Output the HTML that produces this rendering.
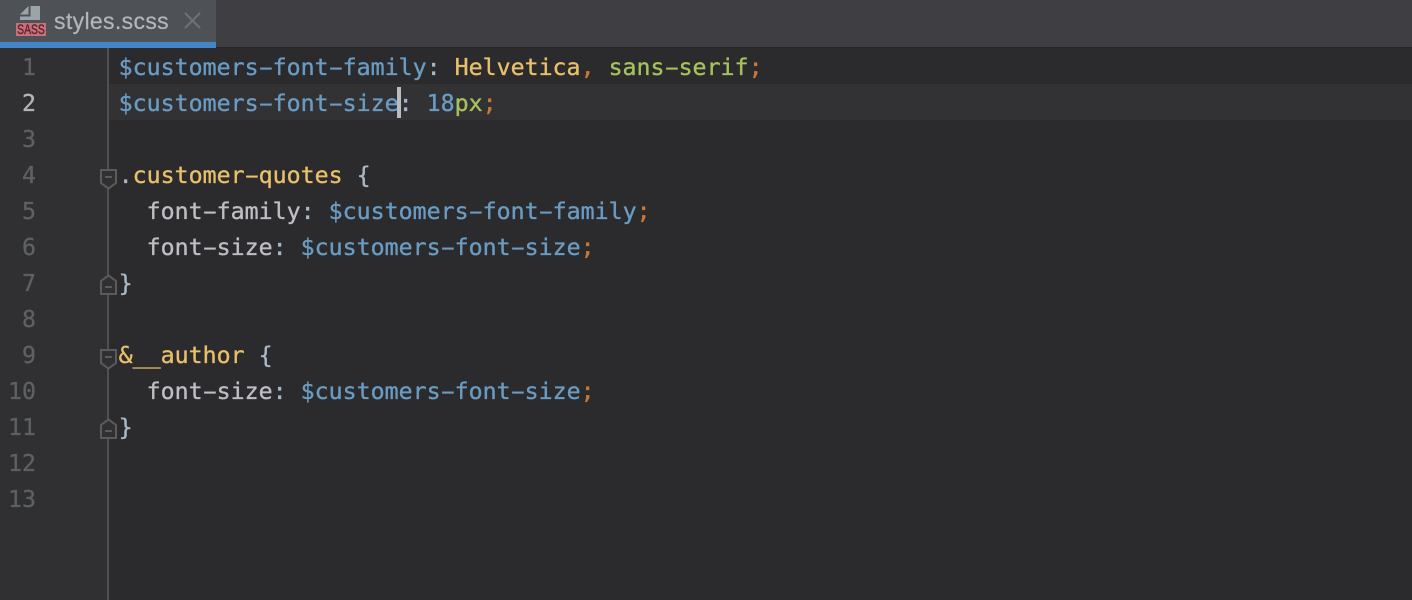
<!DOCTYPE html>
<html>
<head>
<meta charset="utf-8">
<style>
html,body{margin:0;padding:0;background:#2b2b2d;}
#p{position:relative;width:1412px;height:600px;overflow:hidden;background:#2b2b2d;font-family:"DejaVu Sans Mono","Liberation Mono",monospace;}
.a{position:absolute;}
#tabbar{left:0;top:0;width:1412px;background:#3e3e43;border-bottom:1px solid #262628;box-sizing:border-box;height:48px;}
#tab{left:0;top:0;width:216px;height:42px;background:#4e5155;}
#tabline{left:0;top:42px;width:216px;height:6px;background:#4285c9;}
#tabt{left:54px;top:7px;font:23px/28px "Liberation Sans",sans-serif;color:#b4b7b9;letter-spacing:.35px;-webkit-text-stroke:.2px #b4b7b9;}
#gutter{left:0;top:48px;width:108px;height:552px;background:#303033;}
#gl{left:107px;top:48px;width:2px;height:552px;background:#4f5052;}
#cur{left:108px;top:84px;width:1304px;height:36px;background:#323235;}
#caret{left:397px;top:87px;width:4px;height:31px;background:#bbbcbd;}
.n{position:absolute;left:0;width:36px;text-align:right;font-size:23.25px;line-height:36px;color:#5d6164;-webkit-text-stroke:.3px currentColor;}
.l{position:absolute;left:118.6px;font-size:23.25px;line-height:36px;white-space:pre;color:#a9b7c6;-webkit-text-stroke:.35px currentColor;}
.v{color:#6a9cc3}.y{color:#e8bf6a}.g{color:#a5c25c}.o{color:#cc7832}.w{color:#bcbec4}.d{color:#a9b7c6}
.h{display:inline-block;transform:scaleX(1.85);transform-origin:50% 50%;}
svg{position:absolute;}
</style>
</head>
<body>
<div id="p">
<div class="a" id="tabbar"></div>
<div class="a" id="tab"></div>
<div class="a" id="tabline"></div>
<svg style="left:14px;top:4px" width="34" height="34" viewBox="0 0 34 34">
<path d="M6 10.5 L14.5 2 V10.5 Z M16.5 2 H26 V16 H6 V12.5 H16.5 Z" fill="#9aa4a9"/>
<rect x="2" y="19" width="30" height="13" fill="#c9707f"/>
</svg>
<div class="a" style="left:1px;top:22px;width:60px;text-align:center;font:14px/15px 'Liberation Sans',sans-serif;color:#5a2628;transform:scaleX(.74);-webkit-text-stroke:.4px #5a2628;">SASS</div>
<div class="a" id="tabt">styles.scss</div>
<svg style="left:184px;top:12px" width="17" height="17" viewBox="0 0 17 17"><path d="M1 1 L16 16 M16 1 L1 16" stroke="#6f7275" stroke-width="2" fill="none"/></svg>
<div class="a" id="gutter"></div>
<div class="a" id="cur"></div>
<div class="a" id="gl"></div>

<div class="n" style="top:50px">1</div>
<div class="n" style="top:86px;color:#b4b6b8">2</div>
<div class="n" style="top:122px">3</div>
<div class="n" style="top:158px">4</div>
<div class="n" style="top:194px">5</div>
<div class="n" style="top:230px">6</div>
<div class="n" style="top:266px">7</div>
<div class="n" style="top:302px">8</div>
<div class="n" style="top:338px">9</div>
<div class="n" style="top:374px">10</div>
<div class="n" style="top:410px">11</div>
<div class="n" style="top:446px">12</div>
<div class="n" style="top:482px">13</div>

<svg style="left:100px;top:169px" width="17" height="21" viewBox="0 0 17 21"><path d="M1 1 H16 V14 L8.5 19.5 L1 14 Z" fill="#303033" stroke="#5a5b5d" stroke-width="2"/><path d="M5 8 H12" stroke="#5a5b5d" stroke-width="2"/></svg>
<svg style="left:100px;top:274px" width="17" height="21" viewBox="0 0 17 21"><path d="M1 20 H16 V7 L8.5 1.5 L1 7 Z" fill="#303033" stroke="#5a5b5d" stroke-width="2"/><path d="M5 13 H12" stroke="#5a5b5d" stroke-width="2"/></svg>
<svg style="left:100px;top:349px" width="17" height="21" viewBox="0 0 17 21"><path d="M1 1 H16 V14 L8.5 19.5 L1 14 Z" fill="#303033" stroke="#5a5b5d" stroke-width="2"/><path d="M5 8 H12" stroke="#5a5b5d" stroke-width="2"/></svg>
<svg style="left:100px;top:418px" width="17" height="21" viewBox="0 0 17 21"><path d="M1 20 H16 V7 L8.5 1.5 L1 7 Z" fill="#303033" stroke="#5a5b5d" stroke-width="2"/><path d="M5 13 H12" stroke="#5a5b5d" stroke-width="2"/></svg>

<div class="l" style="top:50px"><span class="v">$customers<span class="h">-</span>font<span class="h">-</span>family</span><span class="d">: </span><span class="y">Helvetica</span><span class="o">,</span> <span class="g">sans<span class="h">-</span>serif</span><span class="o">;</span></div>
<div class="l" style="top:86px"><span class="v">$customers<span class="h">-</span>font<span class="h">-</span>size</span><span class="d">: </span><span class="v">18</span><span class="g">px</span><span class="o">;</span></div>
<div class="a" id="caret"></div>
<div class="l" style="top:158px"><span class="d">.</span><span class="y">customer<span class="h">-</span>quotes</span> <span class="d">{</span></div>
<div class="l" style="top:194px">  <span class="w">font<span class="h">-</span>family</span><span class="d">: </span><span class="v">$customers<span class="h">-</span>font<span class="h">-</span>family</span><span class="o">;</span></div>
<div class="l" style="top:230px">  <span class="w">font<span class="h">-</span>size</span><span class="d">: </span><span class="v">$customers<span class="h">-</span>font<span class="h">-</span>size</span><span class="o">;</span></div>
<div class="l" style="top:266px"><span class="d">}</span></div>
<div class="l" style="top:338px"><span class="y">&amp;__author</span> <span class="d">{</span></div>
<div class="l" style="top:374px">  <span class="w">font<span class="h">-</span>size</span><span class="d">: </span><span class="v">$customers<span class="h">-</span>font<span class="h">-</span>size</span><span class="o">;</span></div>
<div class="l" style="top:410px"><span class="d">}</span></div>
</div>
</body>
</html>
